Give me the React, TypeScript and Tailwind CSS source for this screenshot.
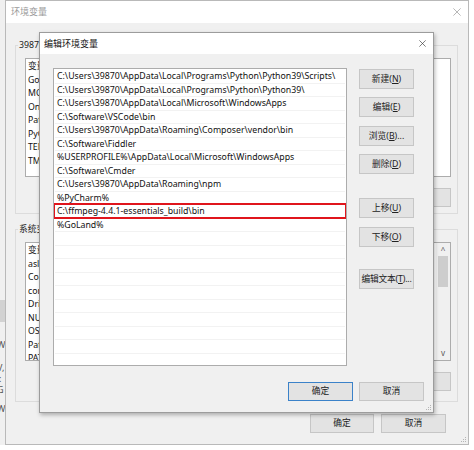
import React from 'react';

const paths = [
  'C:\\Users\\39870\\AppData\\Local\\Programs\\Python\\Python39\\Scripts\\',
  'C:\\Users\\39870\\AppData\\Local\\Programs\\Python\\Python39\\',
  'C:\\Users\\39870\\AppData\\Local\\Microsoft\\WindowsApps',
  'C:\\Software\\VSCode\\bin',
  'C:\\Users\\39870\\AppData\\Roaming\\Composer\\vendor\\bin',
  'C:\\Software\\Fiddler',
  '%USERPROFILE%\\AppData\\Local\\Microsoft\\WindowsApps',
  'C:\\Software\\Cmder',
  'C:\\Users\\39870\\AppData\\Roaming\\npm',
  '%PyCharm%',
  'C:\\ffmpeg-4.4.1-essentials_build\\bin',
  '%GoLand%',
];

const userVars = ['GoLand', 'MOZ_PLUGIN_PATH', 'OneDrive', 'Path', 'PyCharm', 'TEMP', 'TMP'];
const sysVars = ['asl.log', 'ComSpec', 'configsetroot', 'DriverData', 'NUMBER_OF_PROCESSORS', 'OS', 'Path', 'PATHEXT'];

function WinButton({
  text,
  hotkey,
  tail = '',
  primary = false,
  className = '',
}: {
  text: string;
  hotkey?: string;
  tail?: string;
  primary?: boolean;
  className?: string;
}) {
  return (
    <div
      className={`flex shrink-0 items-center justify-center whitespace-nowrap border bg-[#e3e3e3] text-[8.75px] leading-none text-[#222] ${
        primary ? 'border-[#3b82c9]' : 'border-[#c6c6c6]'
      } ${className}`}
    >
      {text}
      {hotkey && (
        <>
          (<span className="underline">{hotkey}</span>)
        </>
      )}
      {tail}
    </div>
  );
}

function CloseIcon({ size, color }: { size: number; color: string }) {
  return (
    <svg width={size} height={size} viewBox="0 0 10 10">
      <path d="M0.5 0.5 L9.5 9.5 M9.5 0.5 L0.5 9.5" stroke={color} strokeWidth="0.9" fill="none" />
    </svg>
  );
}

function Grip() {
  return (
    <svg width="6" height="6" viewBox="0 0 6 6">
      <rect x="4" y="0" width="1" height="1" fill="#b5b5b5" />
      <rect x="2" y="2" width="1" height="1" fill="#b5b5b5" />
      <rect x="4" y="2" width="1" height="1" fill="#b5b5b5" />
      <rect x="0" y="4" width="1" height="1" fill="#b5b5b5" />
      <rect x="2" y="4" width="1" height="1" fill="#b5b5b5" />
      <rect x="4" y="4" width="1" height="1" fill="#b5b5b5" />
    </svg>
  );
}

function VarList({ items, scroll = false }: { items: string[]; scroll?: boolean }) {
  return (
    <div className="ml-[9px] mr-[6px] mt-[7px] flex h-[119px] border border-[#acacac] bg-white leading-[12px]">
      <div className="flex-1 overflow-hidden">
        <div className="flex h-[14px] items-center pl-[2px] text-[#222]">
          <span className="w-[120px]">变量</span>
          <span>值</span>
        </div>
        {items.map((v) => (
          <div key={v} className="flex h-[13.5px] items-center pl-[2px] text-[#111]">
            {v}
          </div>
        ))}
      </div>
      {scroll && (
        <div className="flex w-[14px] flex-col items-center bg-[#f0f0f0]">
          <span className="mt-[3px] text-[8px] leading-none text-[#555]">^</span>
          <div className="mt-[2px] h-[31px] w-[10px] bg-[#cdcdcd]" />
          <div className="flex-1" />
          <span className="mb-[3px] text-[8px] leading-none text-[#555]">v</span>
        </div>
      )}
    </div>
  );
}

export default function App() {
  const emptyRows = Array.from({ length: 10 });
  return (
    <div className="relative h-[450px] w-[474px] overflow-hidden bg-white font-['Noto_Sans','Noto_Sans_CJK_SC',sans-serif] text-[8.75px]">
      {/* window behind, on the left edge */}
      <div className="absolute left-0 top-0 flex h-[445px] w-[8px] flex-col bg-[#f0f0f0] text-[9px] leading-none text-[#555]">
        <div className="h-[300px]" />
        <div className="h-[22px] w-[5px] bg-[#d2d2d2]" />
        <span className="ml-[-3px] mt-[18px]">W</span>
        <span className="ml-[-3px] mt-[14px]">V,</span>
        <span className="ml-[-1px] mt-[2px]">:</span>
        <span className="ml-[-3px] mt-[2px]">G</span>
        <span className="ml-[-3px] mt-[10px]">W</span>
      </div>

      {/* 环境变量 window */}
      <div className="absolute left-[5px] top-0 flex h-[445px] w-[464px] flex-col border border-[#b9b9b9] bg-[#f0f0f0]">
        <div className="flex h-[22px] items-center justify-between bg-white pl-[5px] pr-[7px]">
          <span className="text-[9px] text-[#9a9a9a]">环境变量</span>
          <CloseIcon size={8} color="#9a9a9a" />
        </div>
        <div className="relative flex flex-1 flex-col pl-[9px] pr-[10px] pt-[16px]">
          <fieldset className="border border-[#dcdcdc] pb-[6px]">
            <legend className="ml-[2px] px-[1px] leading-[12px] text-[#222]">39870 的用户变量(U)</legend>
            <VarList items={userVars} />
            <div className="mr-[6px] mt-[11px] flex justify-end gap-[7px]">
              <WinButton text="新建" hotkey="N" tail="..." className="h-[19px] w-[64px]" />
              <WinButton text="编辑" hotkey="E" tail="..." className="h-[19px] w-[64px]" />
              <WinButton text="删除" hotkey="D" className="h-[19px] w-[64px]" />
            </div>
          </fieldset>
          <fieldset className="mt-[9px] border border-[#dcdcdc] pb-[10px]">
            <legend className="ml-[2px] px-[1px] leading-[12px] text-[#222]">系统变量(S)</legend>
            <VarList items={sysVars} scroll />
            <div className="mr-[6px] mt-[11px] flex justify-end gap-[7px]">
              <WinButton text="新建" hotkey="W" tail="..." className="h-[19px] w-[64px]" />
              <WinButton text="编辑" hotkey="I" tail="..." className="h-[19px] w-[64px]" />
              <WinButton text="删除" hotkey="L" className="h-[19px] w-[64px]" />
            </div>
          </fieldset>
          <div className="mr-[12px] mt-[12px] flex justify-end gap-[7px]">
            <WinButton text="确定" className="h-[19px] w-[64px]" />
            <WinButton text="取消" className="h-[19px] w-[65px]" />
          </div>
          <div className="absolute bottom-[1px] right-[1px]">
            <Grip />
          </div>
        </div>
      </div>

      {/* 编辑环境变量 dialog */}
      <div className="absolute left-[39px] top-[32px] flex h-[381px] w-[395px] flex-col border border-[#9c9c9c] bg-[#f0f0f0] shadow-[1px_2px_4px_rgba(0,0,0,0.28)]">
        <div className="flex h-[21px] items-center justify-between bg-white pl-[4px] pr-[7px]">
          <span className="text-[9px] text-[#111]">编辑环境变量</span>
          <CloseIcon size={7} color="#333" />
        </div>
        <div className="relative flex flex-1 flex-col pl-[13px] pr-[19px] pt-[14px]">
          <div className="flex">
            <div className="flex h-[298px] w-[294px] flex-col overflow-visible border border-[#acacac] bg-white pt-px">
              <div className="flex h-full flex-col overflow-hidden leading-[12px]">
                {paths.map((p, i) => (
                  <div
                    key={p}
                    className="relative mx-px flex h-[13.5px] shrink-0 items-center border-b border-[#f2f2f2] pl-[2px] text-[#111]"
                  >
                    {p}
                    {i === 10 && (
                      <div className="absolute bottom-[-1px] left-[-2px] right-[-2px] top-[-2px] rounded-[1px] border-2 border-[#e0151c]" />
                    )}
                  </div>
                ))}
                {emptyRows.map((_, i) => (
                  <div key={i} className="mx-px h-[13.5px] shrink-0 border-b border-[#f2f2f2]" />
                ))}
              </div>
            </div>
            <div className="ml-[12px] flex flex-col pt-px">
              <WinButton text="新建" hotkey="N" className="h-[20px] w-[55px]" />
              <WinButton text="编辑" hotkey="E" className="mt-[8px] h-[20px] w-[55px]" />
              <WinButton text="浏览" hotkey="B" tail="..." className="mt-[9px] h-[20px] w-[55px]" />
              <WinButton text="删除" hotkey="D" className="mt-[8px] h-[20px] w-[55px]" />
              <WinButton text="上移" hotkey="U" className="mt-[24px] h-[20px] w-[55px]" />
              <WinButton text="下移" hotkey="O" className="mt-[9px] h-[20px] w-[55px]" />
              <WinButton text="编辑文本" hotkey="T" tail="..." className="mt-[22px] h-[20px] w-[55px] tracking-[-0.2px]" />
            </div>
          </div>
          <div className="-mr-[10px] mt-[16px] flex justify-end gap-[6px]">
            <WinButton text="确定" primary className="h-[19px] w-[65px]" />
            <WinButton text="取消" className="h-[19px] w-[65px]" />
          </div>
          <div className="absolute bottom-[1px] right-[1px]">
            <Grip />
          </div>
        </div>
      </div>
    </div>
  );
}
